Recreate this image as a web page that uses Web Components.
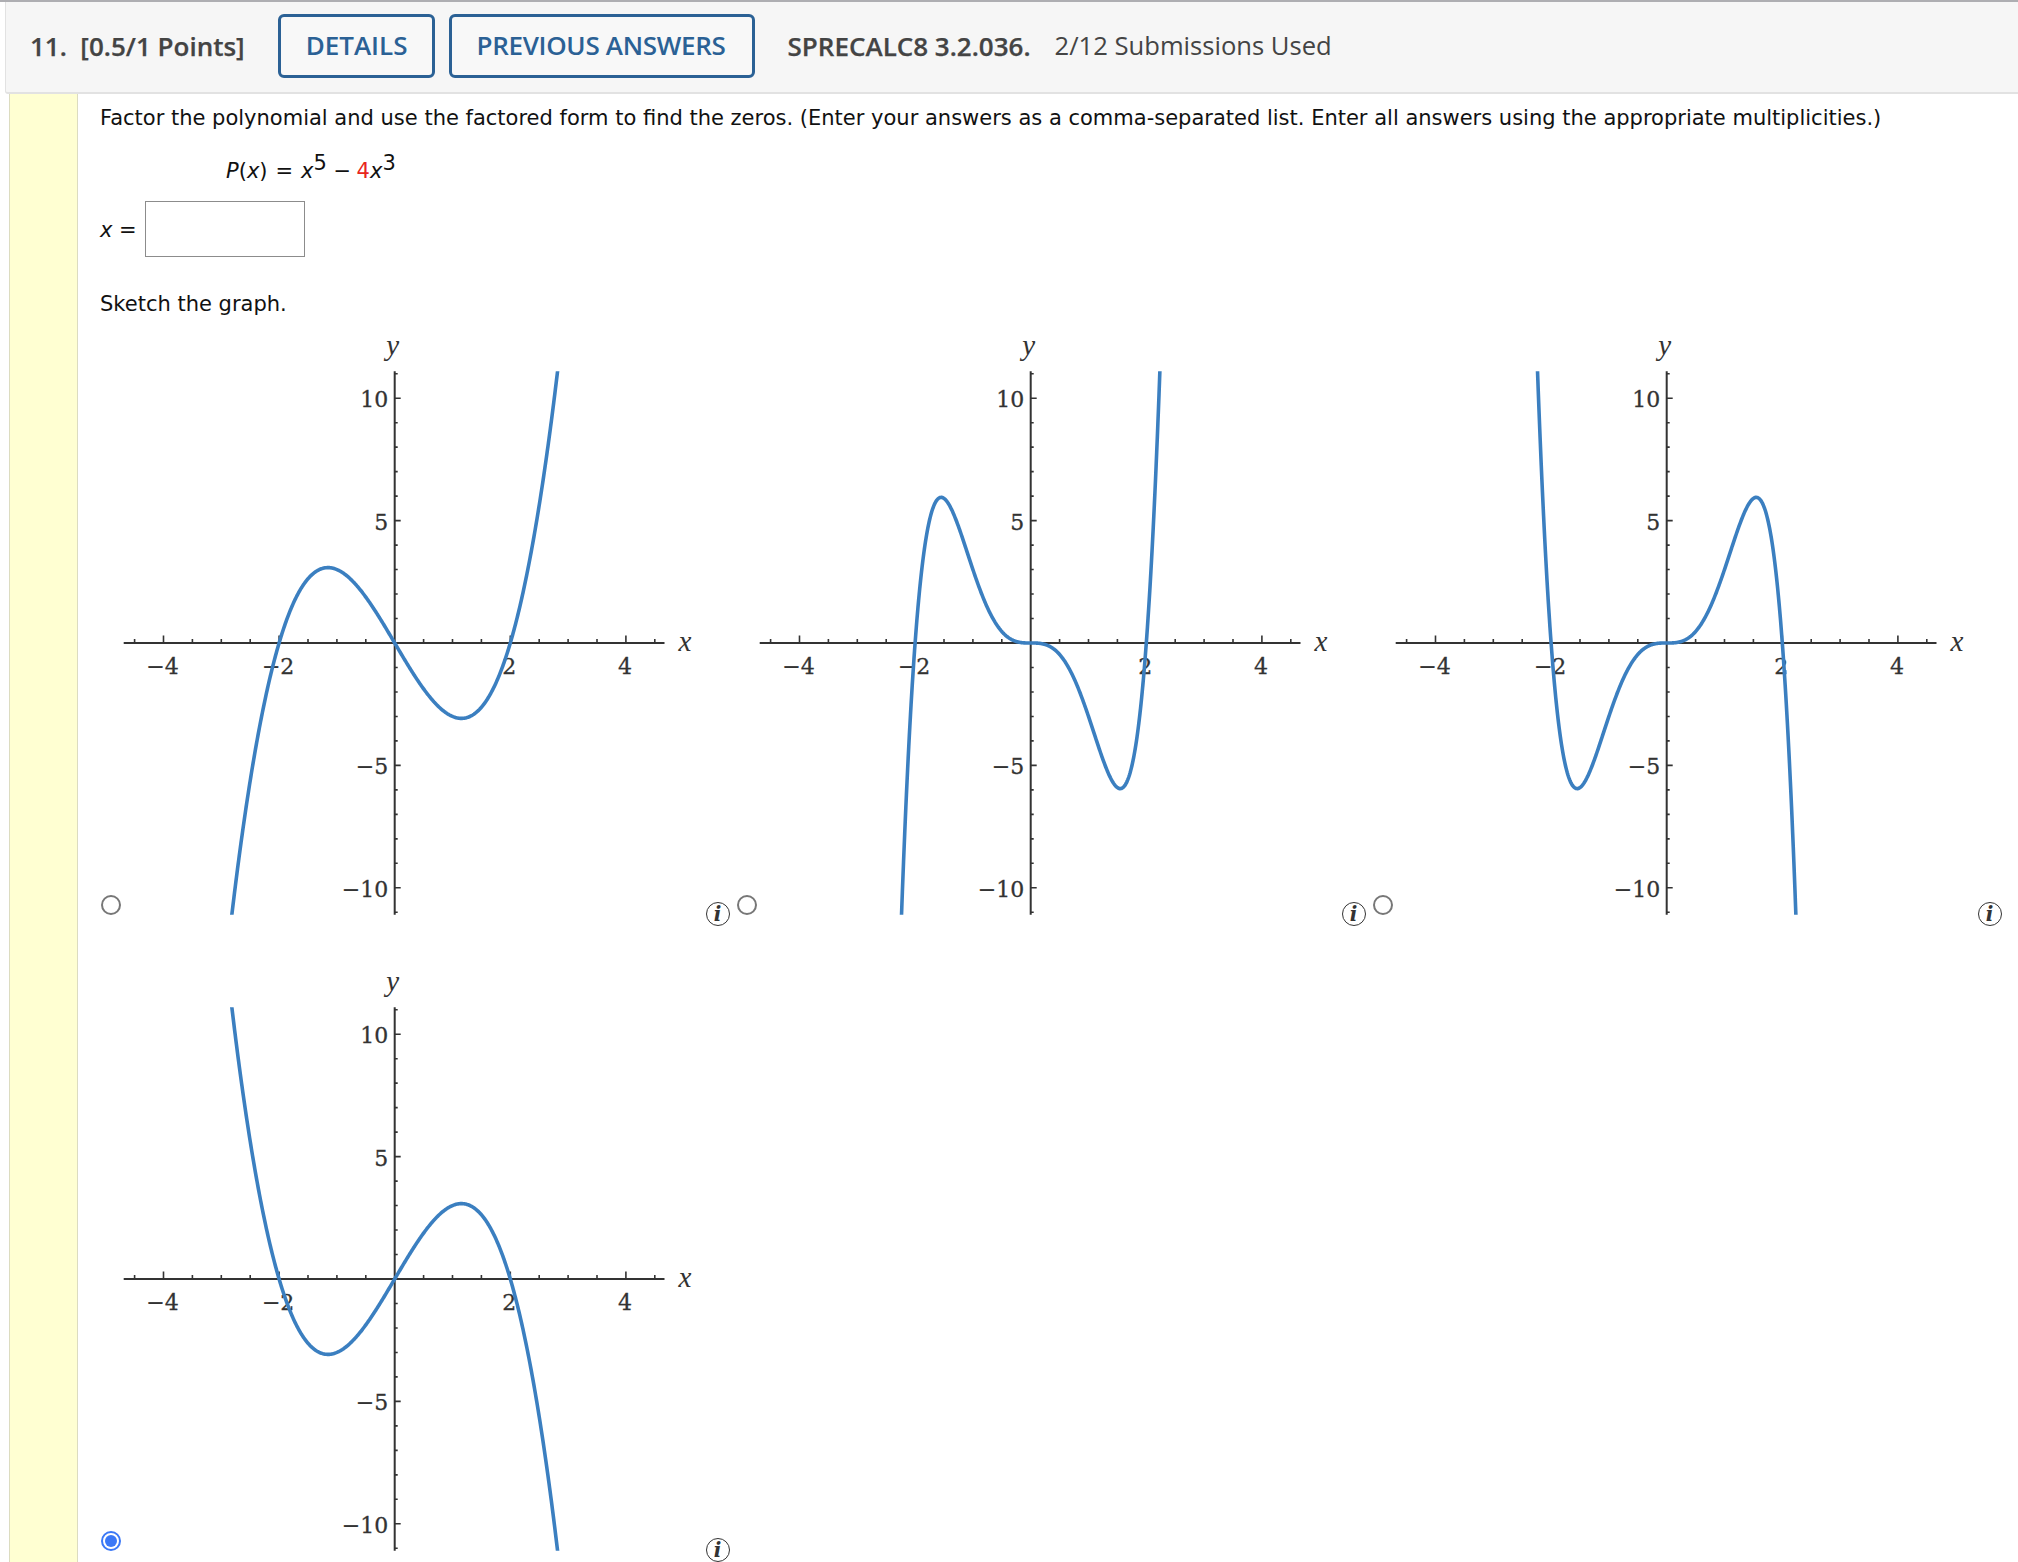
<!DOCTYPE html>
<html>
<head>
<meta charset="utf-8">
<title>Question 11</title>
<style>
  html, body { margin: 0; height: 100%; overflow: hidden; background: #fff; }
</style>
</head>
<body>
<question-card>
  <question-header slot="header">
    <span slot="points">11.&nbsp; [0.5/1 Points]</span>
    <q-button>DETAILS</q-button>
    <q-button tight>PREVIOUS ANSWERS</q-button>
    <span slot="code">SPRECALC8 3.2.036.</span>
    <span slot="used">2/12 Submissions Used</span>
  </question-header>

  <q-text style="margin-top: 9px">Factor the polynomial and use the factored form to find the zeros. (Enter your answers as a comma-separated list. Enter all answers using the appropriate multiplicities.)</q-text>
  <q-formula></q-formula>
  <q-answer></q-answer>
  <q-text style="margin-top: 32px">Sketch the graph.</q-text>

  <choice-grid>
    <graph-choice fn="x*x*x-4*x"></graph-choice>
    <graph-choice fn="x**5-4*x*x*x"></graph-choice>
    <graph-choice fn="4*x*x*x-x**5"></graph-choice>
    <graph-choice fn="4*x-x*x*x" checked></graph-choice>
  </choice-grid>
</question-card>

<script>
// tarjeta de la pregunta: cabecera arriba, franja amarilla y contenido abajo
class QuestionCard extends HTMLElement {
  connectedCallback() {
    this.attachShadow({mode: 'open'}).innerHTML = `
      <style>
        :host { display: block; border-top: 2px solid #aeaeb2; height: 1560px; overflow: hidden; }
        .body { display: flex; margin-left: 9px; height: 1468px; }
        .strip { width: 69px; box-sizing: border-box; flex: none; background: #ffffd2; border: solid #dcdcc0; border-width: 0 1px; }
        .content { flex: 1; padding-left: 22px; min-width: 0; }
      </style>
      <slot name="header"></slot>
      <div class="body">
        <div class="strip"></div>
        <div class="content"><slot></slot></div>
      </div>`;
  }
}

class QuestionHeader extends HTMLElement {
  connectedCallback() {
    this.attachShadow({mode: 'open'}).innerHTML = `
      <style>
        :host {
          display: flex; align-items: center; height: 92px; margin-left: 5px; box-sizing: border-box;
          background: #f6f6f6; border: solid #e2e2e2; border-width: 0 0 2px 1px; border-bottom-left-radius: 3px;
          font: 26px "Open Sans", sans-serif; color: #444; padding: 0 0 3px 24px;
        }
        ::slotted([slot=points]) { font-weight: 600; margin-right: 33px; -webkit-text-stroke: 0.25px #444; }
        .btns { display: flex; gap: 14px; margin-right: 33px; }
        ::slotted([slot=code]) { font-weight: 600; margin-right: 24px; -webkit-text-stroke: 0.25px #444; }
        ::slotted([slot=used]) { font-size: 25.6px; }
      </style>
      <slot name="points"></slot>
      <div class="btns"><slot></slot></div>
      <slot name="code"></slot>
      <slot name="used"></slot>`;
  }
}

class QButton extends HTMLElement {
  connectedCallback() {
    this.attachShadow({mode: 'open'}).innerHTML = `
      <style>
        :host {
          display: block; box-sizing: border-box; height: 64px; line-height: 57px; padding: 0 25px;
          border: 3px solid #2b6195; border-radius: 6px; background: #f8f8f8;
          color: #2b6195; font-weight: 600; font-size: 26px;
        }
        :host([tight]) { letter-spacing: -0.3px; padding-left: 24px; padding-right: 26px; }
      </style>
      <slot></slot>`;
  }
}

class QText extends HTMLElement {
  connectedCallback() {
    this.attachShadow({mode: 'open'}).innerHTML = `
      <style>
        :host { display: block; font: 21px/30px "DejaVu Sans", sans-serif; color: #111; white-space: nowrap; }
      </style>
      <slot></slot>`;
  }
}

class QFormula extends HTMLElement {
  connectedCallback() {
    this.attachShadow({mode: 'open'}).innerHTML = `
      <style>
        :host { display: block; margin: 22px 0 0 126px; font: 21px/32px "DejaVu Sans", sans-serif; color: #111; white-space: nowrap; }
        i { font-style: italic; }
        .lhs { word-spacing: 1.3px; }
        .minus { margin-right: -1.3px; }
        sup { font-size: 21px; line-height: 0; vertical-align: 8px; }
        .red { color: #e8261c; }
      </style>
      <span class="lhs"><i>P</i>(<i>x</i>) = </span><i>x</i><sup>5</sup> <span class="minus">−</span> <span class="red">4</span><i>x</i><sup>3</sup>`;
  }
}

class QAnswer extends HTMLElement {
  connectedCallback() {
    this.attachShadow({mode: 'open'}).innerHTML = `
      <style>
        :host { display: flex; align-items: center; gap: 8px; margin-top: 14px; font: 21px "DejaVu Sans", sans-serif; color: #111; }
        .label { padding-top: 2px; }
        .box { width: 160px; height: 56px; box-sizing: border-box; border: 1px solid #8c8c8c; background: #fff; }
      </style>
      <span class="label"><i>x</i> =</span>
      <div class="box"></div>`;
  }
}

class ChoiceGrid extends HTMLElement {
  connectedCallback() {
    this.attachShadow({mode: 'open'}).innerHTML = `
      <style>
        :host { display: grid; grid-template-columns: repeat(3, 636px); grid-auto-rows: 636px; margin-top: 11px; }
      </style>
      <slot></slot>`;
  }
}

// una opcion: radio, grafica y boton de info. La curva sale de la funcion del atributo fn
class GraphChoice extends HTMLElement {
  connectedCallback() {
    const fn = new Function('x', 'return ' + this.getAttribute('fn'));
    const ox = 272.7, oy = 313, ux = 57.8, uy = 24.48;
    const px = x => (ox + x * ux).toFixed(2);
    const py = y => (oy - y * uy).toFixed(2);

    let curve = '';
    for (let x = -4.6; x <= 4.6; x += 0.01) {
      curve += (curve ? 'L' : 'M') + px(x) + ' ' + py(fn(x));
    }

    let ticks = '';
    for (let i = -9; i <= 9; i++) {
      const h = i % 4 === 0 && i !== 0 ? 7.5 : 4;
      if (i !== 0) ticks += `M${px(i / 2)} ${oy}V${oy - h}`;
    }
    for (let i = -11; i <= 11; i++) {
      const w = i % 5 === 0 ? 6 : 3;
      if (i !== 0) ticks += `M${ox} ${py(i)}H${ox + w}`;
    }

    const xLabels = [-4, -2, 2, 4].map(v =>
      `<text class="num" x="${px(v) - 1}" y="${oy + 31}" text-anchor="middle">${v < 0 ? '−' + -v : v}</text>`).join('');
    const yLabels = [-10, -5, 5, 10].map(v =>
      `<text class="num" x="${ox - 6.5}" y="${+py(v) + 9}" text-anchor="end">${v < 0 ? '−' + -v : v}</text>`).join('');

    const checked = this.hasAttribute('checked');
    this.attachShadow({mode: 'open'}).innerHTML = `
      <style>
        :host { display: flex; align-items: flex-start; }
        .radio {
          flex: none; width: 20px; height: 20px; box-sizing: border-box; margin: 565px 1px 0 0.5px;
          border: 2px solid #777; border-radius: 50%; background: #fff;
        }
        .radio.on { border-color: #3b78f6; padding: 2px; background: #3b78f6 content-box; }
        svg { flex: none; display: block; }
        .num { font: 22px "DejaVu Serif", serif; fill: #333; stroke: #333; stroke-width: 0.3px; }
        .var { font: italic 29px "Liberation Serif", serif; fill: #333; }
        .info {
          flex: none; width: 24px; height: 24px; box-sizing: border-box; margin: 572px 0 0 2px;
          border: 1px solid #333; border-radius: 50%; text-align: center;
          font: italic bold 20px/22px "DejaVu Serif", serif; color: #333;
        }
      </style>
      <div class="radio ${checked ? 'on' : ''}"></div>
      <svg width="582" height="590" viewBox="0 0 582 590">
        <clipPath id="plot"><rect x="0" y="${py(11.1)}" width="582" height="${22.2 * uy}"></rect></clipPath>
        <path d="M1.7 ${oy}H542.5M${ox} ${py(11.1)}V${py(-11.1)}" stroke="#333" stroke-width="2" fill="none"></path>
        <path d="${ticks}" stroke="#333" stroke-width="1.6" fill="none"></path>
        ${xLabels}${yLabels}
        <text class="var" x="${ox - 2}" y="25" text-anchor="middle">y</text>
        <text class="var" x="563" y="${oy + 8}" text-anchor="middle">x</text>
        <path d="${curve}" stroke="#3b7fc0" stroke-width="3.6" fill="none" clip-path="url(#plot)"></path>
      </svg>
      <div class="info">i</div>`;
  }
}

customElements.define('question-card', QuestionCard);
customElements.define('question-header', QuestionHeader);
customElements.define('q-button', QButton);
customElements.define('q-text', QText);
customElements.define('q-formula', QFormula);
customElements.define('q-answer', QAnswer);
customElements.define('choice-grid', ChoiceGrid);
customElements.define('graph-choice', GraphChoice);
</script>
</body>
</html>
